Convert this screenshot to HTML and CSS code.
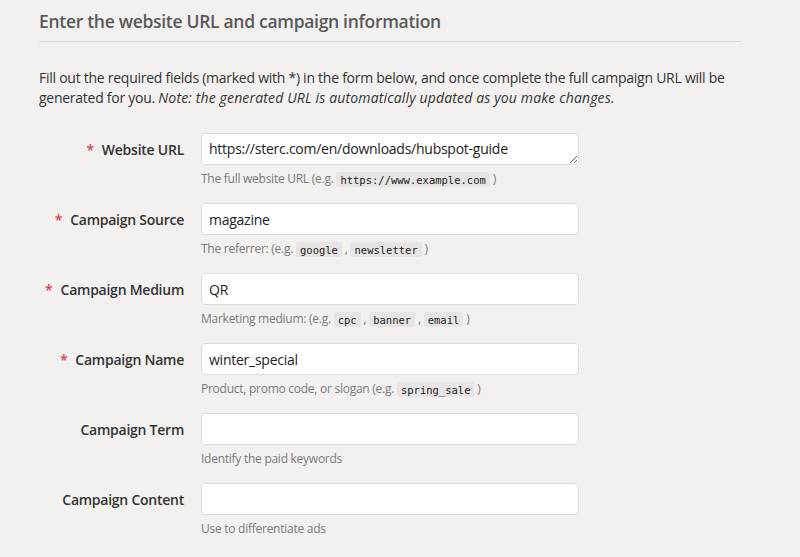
FILE: index.html
```html
<!DOCTYPE html>
<html lang="en">
<head>
<meta charset="utf-8">
<title>Campaign URL Builder</title>
<link rel="stylesheet" href="styles.css">
</head>
<body>
<div class="page">
  <h2 class="title">Enter the website URL and campaign information</h2>
  <p class="intro">Fill out the required fields (marked with *) in the form below, and once complete the full campaign URL will be generated for you. <em>Note: the generated URL is automatically updated as you make changes.</em></p>

  <form class="form">
    <div class="row">
      <label class="label"><span class="req">*</span>Website URL</label>
      <div class="field">
        <textarea class="input area" rows="1">https://sterc.com/en/downloads/hubspot-guide</textarea>
        <div class="help">The full website URL (e.g. <code>https://www.example.com</code> )</div>
      </div>
    </div>
    <div class="row">
      <label class="label"><span class="req">*</span>Campaign Source</label>
      <div class="field">
        <input class="input" type="text" value="magazine">
        <div class="help">The referrer: (e.g. <code>google</code> , <code>newsletter</code> )</div>
      </div>
    </div>
    <div class="row">
      <label class="label"><span class="req">*</span>Campaign Medium</label>
      <div class="field">
        <input class="input" type="text" value="QR">
        <div class="help">Marketing medium: (e.g. <code>cpc</code> , <code>banner</code> , <code>email</code> )</div>
      </div>
    </div>
    <div class="row">
      <label class="label"><span class="req">*</span>Campaign Name</label>
      <div class="field">
        <input class="input" type="text" value="winter_special">
        <div class="help">Product, promo code, or slogan (e.g. <code>spring_sale</code> )</div>
      </div>
    </div>
    <div class="row">
      <label class="label">Campaign Term</label>
      <div class="field">
        <input class="input" type="text" value="">
        <div class="help">Identify the paid keywords</div>
      </div>
    </div>
    <div class="row">
      <label class="label">Campaign Content</label>
      <div class="field">
        <input class="input" type="text" value="">
        <div class="help">Use to differentiate ads</div>
      </div>
    </div>
  </form>
</div>
</body>
</html>
```

FILE: styles.css
```css
html, body {
  margin: 0;
  padding: 0;
  background: #f2f1ef;
}

body {
  font-family: "Open Sans", "Liberation Sans", sans-serif;
  color: #333;
}

.page {
  width: 702px;
  padding: 9px 0 0 39px;
}

.title {
  margin: 0;
  font-size: 17.5px;
  line-height: 24px;
  letter-spacing: -0.3px;
  font-weight: 600;
  color: #595959;
  padding-bottom: 8px;
  border-bottom: 1px solid #dcdbd9;
}

.intro {
  margin: 26px 0 0 0;
  font-size: 14px;
  line-height: 19.5px;
  letter-spacing: -0.26px;
  color: #333;
  width: 702px;
}

.intro em {
  font-style: italic;
  letter-spacing: 0.15px;
}

.form {
  margin-top: 26px;
  display: flex;
  flex-direction: column;
  gap: 15px;
}

.row {
  display: grid;
  grid-template-columns: 145px 378px;
  column-gap: 17px;
  align-items: start;
}

.label {
  height: 32px;
  display: flex;
  align-items: center;
  justify-content: flex-end;
  font-size: 14px;
  letter-spacing: -0.25px;
  font-weight: 600;
  color: #333;
  white-space: nowrap;
}

.req {
  color: #d4434f;
  margin-right: 8px;
  font-weight: 600;
}

.field {
  display: flex;
  flex-direction: column;
}

.input {
  box-sizing: border-box;
  width: 378px;
  height: 32px;
  margin: 0;
  padding: 0 7px;
  border: 1px solid #dcdbd9;
  border-radius: 4px;
  background: #fff;
  font-family: "Open Sans", "Liberation Sans", sans-serif;
  font-size: 14px;
  letter-spacing: -0.25px;
  color: #222;
  outline: none;
}

.area {
  display: block;
  padding: 5px 7px;
  line-height: 20px;
  resize: both;
  overflow: hidden;
}

.help {
  margin-top: 5px;
  font-size: 12px;
  letter-spacing: -0.26px;
  line-height: 18px;
  color: #7a7a7a;
  white-space: nowrap;
}

.help code {
  font-family: "DejaVu Sans Mono", "Liberation Mono", monospace;
  font-size: 10.5px;
  letter-spacing: 0;
  font-weight: normal;
  color: #222;
  background: #e6e5e3;
  border-radius: 3px;
  padding: 1.5px 4px;
}
```
